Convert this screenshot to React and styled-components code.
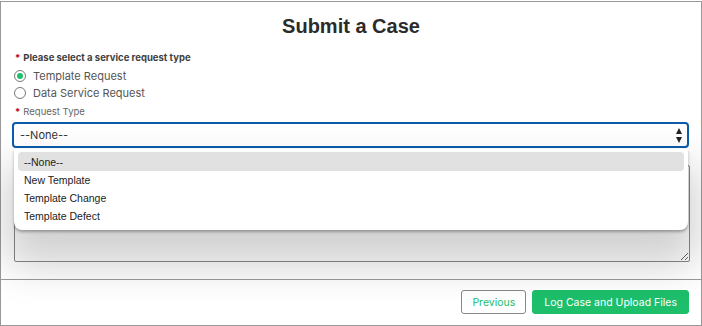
import React from 'react'
import styled, { createGlobalStyle } from 'styled-components'

const Global = createGlobalStyle`
  html, body { margin: 0; padding: 0; background: #fff; }
  body { padding-top: 1px; font-family: Inter, "Noto Sans", sans-serif; }
  * { box-sizing: border-box; }
`

const Card = styled.div`
  width: 702px;
  height: 325px;
  border: 1px solid #999;
  display: flex;
  flex-direction: column;
  background: #fff;
`

const Header = styled.div`
  height: 47px;
  display: flex;
  align-items: center;
  justify-content: center;
`

const Title = styled.h1`
  margin: 0;
  font-family: "Liberation Sans", Arial, sans-serif;
  font-size: 20px;
  font-weight: 700;
  color: #2b2b2b;
  padding-top: 2px;
`

const Body = styled.div`
  flex: 1;
  padding: 0 12px 0 11px;
  display: flex;
  flex-direction: column;
`

const Label = styled.div`
  font-size: 9.5px;
  font-weight: ${(p) => (p.bold ? 700 : 400)};
  color: ${(p) => (p.bold ? '#3e3e3e' : '#666')};
  height: 16px;
  display: flex;
  align-items: center;
  padding-left: 3px;
  margin-bottom: ${(p) => (p.bold ? '2px' : '0')};
  margin-top: ${(p) => (p.bold ? '0' : '2px')};
`

const Star = styled.span`
  color: #d0021b;
  margin-right: 3px;
  font-weight: 700;
`

const RadioRow = styled.label`
  display: flex;
  align-items: center;
  gap: 7px;
  height: 17px;
  font-size: 11px;
  color: #555;
  padding-left: 2px;
`

const RadioDot = styled.span`
  width: 12px;
  height: 12px;
  border-radius: 50%;
  border: 1px solid #777;
  display: flex;
  align-items: center;
  justify-content: center;
  &::after {
    content: '';
    width: 6px;
    height: 6px;
    border-radius: 50%;
    background: ${(p) => (p.checked ? '#1dbf6b' : 'transparent')};
  }
`

const SelectWrap = styled.div`
  position: relative;
  margin-top: 3px;
`

const SelectBox = styled.div`
  height: 26px;
  border: 2px solid #0b5cab;
  border-radius: 4px;
  display: flex;
  align-items: center;
  justify-content: space-between;
  padding: 0 5px 0 6px;
  font-size: 11px;
  color: #333;
`

const Arrows = styled.div`
  display: flex;
  flex-direction: column;
  gap: 3px;
  align-items: center;
`

const Tri = styled.span`
  width: 0;
  height: 0;
  border-left: 3.5px solid transparent;
  border-right: 3.5px solid transparent;
  ${(p) => (p.up ? 'border-bottom: 6px solid #222;' : 'border-top: 6px solid #222;')}
`

const Menu = styled.ul`
  position: absolute;
  left: 2px;
  right: 1px;
  top: 27px;
  margin: 0;
  padding: 3px 4px 5px;
  list-style: none;
  background: #fff;
  border-radius: 0 0 8px 8px;
  box-shadow: 0 2px 3px rgba(0, 0, 0, 0.3), 0 26px 40px 10px rgba(0, 0, 0, 0.18);
  z-index: 2;
`

const Item = styled.li`
  height: 18px;
  display: flex;
  align-items: center;
  padding-left: 6px;
  border-radius: 4px;
  font-family: "Liberation Sans", Arial, sans-serif;
  font-size: 10.5px;
  color: #222;
  background: ${(p) => (p.active ? '#e1e1e1' : 'transparent')};
  &:first-child { height: 19px; }
`

const TextArea = styled.textarea`
  display: block;
  width: 676px;
  height: 97px;
  margin: 17px 0 0 2px;
  border: 1px solid #888;
  border-radius: 2px;
  resize: vertical;
  font-family: inherit;
  background: #fff;
`

const Footer = styled.div`
  height: 46px;
  border-top: 1px solid #999;
  display: flex;
  justify-content: flex-end;
  align-items: flex-start;
  gap: 6px;
  padding: 10px 12px 0 0;
`

const Button = styled.button`
  height: 24px;
  padding: 0 ${(p) => (p.primary ? '11px' : '10px')};
  border-radius: 3px;
  font-family: Inter, "Noto Sans", sans-serif;
  font-size: 10.5px;
  border: 1px solid ${(p) => (p.primary ? '#1dbf6b' : '#888')};
  background: ${(p) => (p.primary ? '#1dbf6b' : '#fff')};
  color: ${(p) => (p.primary ? '#fff' : '#1dbf6b')};
`

const options = ['--None--', 'New Template', 'Template Change', 'Template Defect']

export default function App() {
  return (
    <>
      <Global />
      <Card>
        <Header>
          <Title>Submit a Case</Title>
        </Header>
        <Body>
          <Label bold><Star>*</Star>Please select a service request type</Label>
          <RadioRow><RadioDot checked />Template Request</RadioRow>
          <RadioRow><RadioDot />Data Service Request</RadioRow>
          <Label><Star>*</Star>Request Type</Label>
          <SelectWrap>
            <SelectBox>
              <span>--None--</span>
              <Arrows><Tri up /><Tri /></Arrows>
            </SelectBox>
            <Menu>
              {options.map((o, i) => (
                <Item key={o} active={i === 0}>{o}</Item>
              ))}
            </Menu>
          </SelectWrap>
          <TextArea />
        </Body>
        <Footer>
          <Button>Previous</Button>
          <Button primary>Log Case and Upload Files</Button>
        </Footer>
      </Card>
    </>
  )
}
